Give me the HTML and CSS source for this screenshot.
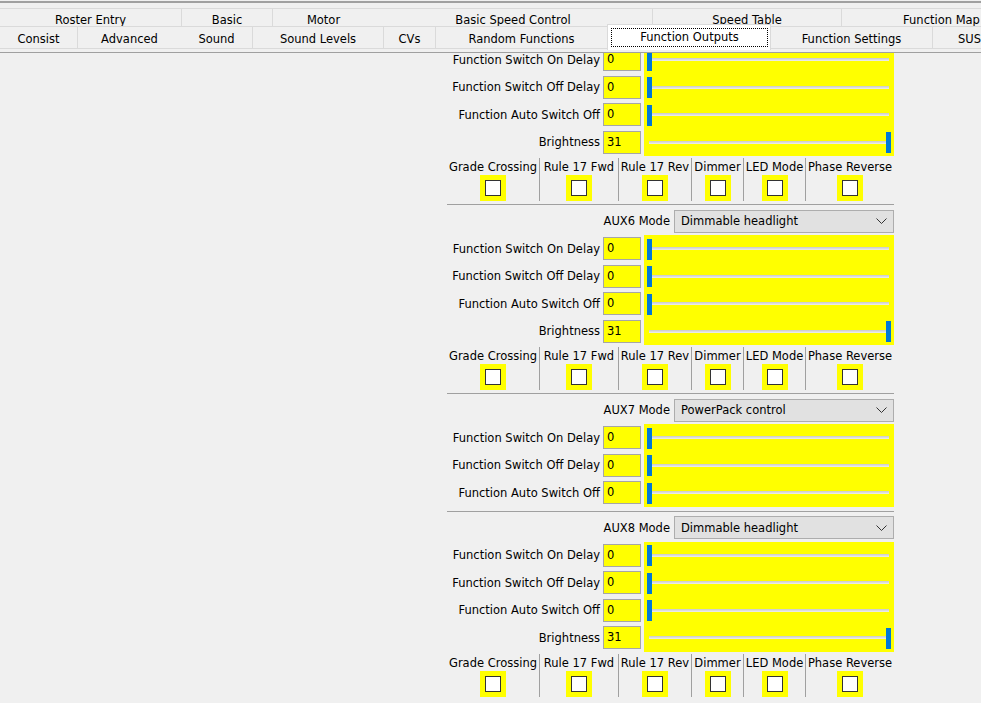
FILE: index.html
```html
<!DOCTYPE html>
<html>
<head>
<meta charset="utf-8">
<link rel="stylesheet" href="styles.css">
</head>
<body>
<div class="window">
  <div class="header">
    <div class="topline"></div>
    <div class="tab-row row1">
      <div class="tab t-roster">Roster Entry</div>
      <div class="tab t-basic sep">Basic</div>
      <div class="tab t-motor sep">Motor</div>
      <div class="tab t-bsc">Basic Speed Control</div>
      <div class="tab t-speed sep">Speed Table</div>
      <div class="tab t-fmap sep">Function Map</div>
    </div>
    <div class="tab-row row2">
      <div class="tab t-consist">Consist</div>
      <div class="tab t-adv sep">Advanced</div>
      <div class="tab t-sound">Sound</div>
      <div class="tab t-slev sep">Sound Levels</div>
      <div class="tab t-cvs sep">CVs</div>
      <div class="tab t-rand sep">Random Functions</div>
      <div class="tab t-fout selected"><span class="focus">Function Outputs</span></div>
      <div class="tab t-fset">Function Settings</div>
      <div class="tab t-sus sep">SUSI</div>
    </div>
    <div class="bottomline"></div>
  </div>

  <div class="viewport">
    <div class="scroll">

      <section class="section">
        <div class="mode-row">
          <span class="mode-label">AUX5 Mode</span>
          <div class="select"><span>Dimmable headlight</span><svg class="chev" width="11" height="6" viewBox="0 0 11 6"><polyline points="0.5,0.5 5.5,5.5 10.5,0.5" fill="none" stroke="#333" stroke-width="1"/></svg></div>
        </div>
        <div class="fields">
          <div class="frow"><span class="flabel">Function Switch On Delay</span><span class="input">0</span><div class="slider"><div class="track"></div><div class="thumb min"></div></div></div>
          <div class="frow"><span class="flabel">Function Switch Off Delay</span><span class="input">0</span><div class="slider"><div class="track"></div><div class="thumb min"></div></div></div>
          <div class="frow"><span class="flabel">Function Auto Switch Off</span><span class="input">0</span><div class="slider"><div class="track"></div><div class="thumb min"></div></div></div>
          <div class="frow"><span class="flabel">Brightness</span><span class="input">31</span><div class="slider"><div class="track"></div><div class="thumb max"></div></div></div>
        </div>
        <div class="checks">
          <div class="ccol"><span class="clabel">Grade Crossing</span><span class="cbox"><span class="cinner"></span></span></div>
          <div class="ccol"><span class="clabel">Rule 17 Fwd</span><span class="cbox"><span class="cinner"></span></span></div>
          <div class="ccol"><span class="clabel">Rule 17 Rev</span><span class="cbox"><span class="cinner"></span></span></div>
          <div class="ccol"><span class="clabel">Dimmer</span><span class="cbox"><span class="cinner"></span></span></div>
          <div class="ccol"><span class="clabel">LED Mode</span><span class="cbox"><span class="cinner"></span></span></div>
          <div class="ccol"><span class="clabel">Phase Reverse</span><span class="cbox"><span class="cinner"></span></span></div>
        </div>
      </section>

      <section class="section">
        <div class="mode-row">
          <span class="mode-label">AUX6 Mode</span>
          <div class="select"><span>Dimmable headlight</span><svg class="chev" width="11" height="6" viewBox="0 0 11 6"><polyline points="0.5,0.5 5.5,5.5 10.5,0.5" fill="none" stroke="#333" stroke-width="1"/></svg></div>
        </div>
        <div class="fields">
          <div class="frow"><span class="flabel">Function Switch On Delay</span><span class="input">0</span><div class="slider"><div class="track"></div><div class="thumb min"></div></div></div>
          <div class="frow"><span class="flabel">Function Switch Off Delay</span><span class="input">0</span><div class="slider"><div class="track"></div><div class="thumb min"></div></div></div>
          <div class="frow"><span class="flabel">Function Auto Switch Off</span><span class="input">0</span><div class="slider"><div class="track"></div><div class="thumb min"></div></div></div>
          <div class="frow"><span class="flabel">Brightness</span><span class="input">31</span><div class="slider"><div class="track"></div><div class="thumb max"></div></div></div>
        </div>
        <div class="checks">
          <div class="ccol"><span class="clabel">Grade Crossing</span><span class="cbox"><span class="cinner"></span></span></div>
          <div class="ccol"><span class="clabel">Rule 17 Fwd</span><span class="cbox"><span class="cinner"></span></span></div>
          <div class="ccol"><span class="clabel">Rule 17 Rev</span><span class="cbox"><span class="cinner"></span></span></div>
          <div class="ccol"><span class="clabel">Dimmer</span><span class="cbox"><span class="cinner"></span></span></div>
          <div class="ccol"><span class="clabel">LED Mode</span><span class="cbox"><span class="cinner"></span></span></div>
          <div class="ccol"><span class="clabel">Phase Reverse</span><span class="cbox"><span class="cinner"></span></span></div>
        </div>
      </section>

      <section class="section short">
        <div class="mode-row">
          <span class="mode-label">AUX7 Mode</span>
          <div class="select"><span>PowerPack control</span><svg class="chev" width="11" height="6" viewBox="0 0 11 6"><polyline points="0.5,0.5 5.5,5.5 10.5,0.5" fill="none" stroke="#333" stroke-width="1"/></svg></div>
        </div>
        <div class="fields">
          <div class="frow"><span class="flabel">Function Switch On Delay</span><span class="input">0</span><div class="slider"><div class="track"></div><div class="thumb min"></div></div></div>
          <div class="frow"><span class="flabel">Function Switch Off Delay</span><span class="input">0</span><div class="slider"><div class="track"></div><div class="thumb min"></div></div></div>
          <div class="frow"><span class="flabel">Function Auto Switch Off</span><span class="input">0</span><div class="slider"><div class="track"></div><div class="thumb min"></div></div></div>
        </div>
      </section>

      <section class="section">
        <div class="mode-row">
          <span class="mode-label">AUX8 Mode</span>
          <div class="select"><span>Dimmable headlight</span><svg class="chev" width="11" height="6" viewBox="0 0 11 6"><polyline points="0.5,0.5 5.5,5.5 10.5,0.5" fill="none" stroke="#333" stroke-width="1"/></svg></div>
        </div>
        <div class="fields">
          <div class="frow"><span class="flabel">Function Switch On Delay</span><span class="input">0</span><div class="slider"><div class="track"></div><div class="thumb min"></div></div></div>
          <div class="frow"><span class="flabel">Function Switch Off Delay</span><span class="input">0</span><div class="slider"><div class="track"></div><div class="thumb min"></div></div></div>
          <div class="frow"><span class="flabel">Function Auto Switch Off</span><span class="input">0</span><div class="slider"><div class="track"></div><div class="thumb min"></div></div></div>
          <div class="frow"><span class="flabel">Brightness</span><span class="input">31</span><div class="slider"><div class="track"></div><div class="thumb max"></div></div></div>
        </div>
        <div class="checks">
          <div class="ccol"><span class="clabel">Grade Crossing</span><span class="cbox"><span class="cinner"></span></span></div>
          <div class="ccol"><span class="clabel">Rule 17 Fwd</span><span class="cbox"><span class="cinner"></span></span></div>
          <div class="ccol"><span class="clabel">Rule 17 Rev</span><span class="cbox"><span class="cinner"></span></span></div>
          <div class="ccol"><span class="clabel">Dimmer</span><span class="cbox"><span class="cinner"></span></span></div>
          <div class="ccol"><span class="clabel">LED Mode</span><span class="cbox"><span class="cinner"></span></span></div>
          <div class="ccol"><span class="clabel">Phase Reverse</span><span class="cbox"><span class="cinner"></span></span></div>
        </div>
      </section>

    </div>
  </div>
</div>
</body>
</html>
```
FILE: styles.css
```css
* { box-sizing: border-box; }
html, body {
  margin: 0;
  padding: 0;
  background: #f0f0f0;
}
body {
  width: 981px;
  height: 703px;
  overflow: hidden;
  font-family: "DejaVu Sans", "Liberation Sans", sans-serif;
  font-size: 11.5px;
  color: #000;
}
.window {
  display: flex;
  flex-direction: column;
  height: 703px;
}

/* ---------- tab header ---------- */
.header {
  position: relative;
  z-index: 2;
  background: #f0f0f0;
  flex: 0 0 auto;
}
.topline {
  height: 2px;
  margin-top: 1px;
  background: #a0a0a0;
}
.tab-row {
  display: flex;
  white-space: nowrap;
  overflow: hidden;
  border-top: 1px solid #dadada;
}
.row1 {
  margin-top: 5px;
  height: 18px;
}
.row2 {
  height: 23px;
  border-bottom: 1px solid #dadada;
  overflow: visible;
}
.tab {
  flex: 0 0 auto;
  text-align: center;
  line-height: 14px;
}
.row1 .tab { padding-top: 4px; height: 17px; }
.row2 .tab { padding-top: 5px; height: 22px; }
.tab.sep { border-left: 1px solid #dadada; }

.t-roster { width: 181px; }
.t-basic { width: 91px; }
.t-motor { width: 102px; }
.t-bsc { width: 278px; }
.t-speed { width: 189px; }
.t-fmap { width: 200px; }

.t-consist { width: 77px; }
.t-adv { width: 104px; }
.t-sound { width: 71px; }
.t-slev { width: 131px; }
.t-cvs { width: 52px; }
.t-rand { width: 172px; }
.t-fout { width: 164px; }
.t-fset { width: 161px; }
.t-sus { width: 49px; text-align: left; padding-left: 25px; overflow: hidden; }

.row2 .tab.selected {
  position: relative;
  margin-top: -3px;
  height: 26px;
  padding: 3px 2px 0 3px;
  background: #ffffff;
  border: 1px solid #dadada;
  border-bottom: none;
}
.focus {
  display: block;
  height: 19px;
  border: 1px dotted #000;
  line-height: 16px;
}
.bottomline {
  height: 1px;
  margin-top: 3px;
  background: #a0a0a0;
}

/* ---------- scrolling content ---------- */
.viewport {
  flex: 1 1 auto;
  overflow: hidden;
  position: relative;
  z-index: 1;
}
.scroll {
  margin-top: -38px;
  margin-left: 447px;
  width: 447px;
}
.section {
  border-top: 1px solid #a0a0a0;
  padding: 4px 0 3px;
}
.section.short { padding-bottom: 4px; }

.mode-row {
  display: flex;
  justify-content: flex-end;
  align-items: center;
  gap: 4px;
  height: 23px;
  padding-top: 1px;
}
.select {
  width: 220px;
  height: 23px;
  background: #e1e1e1;
  border: 1px solid #adadad;
  display: flex;
  align-items: center;
  justify-content: space-between;
  padding: 0 6px 0 6px;
}
.chev { display: block; }

.fields { margin-top: 3px; }
.frow {
  display: grid;
  grid-template-columns: 1fr 38px 250px;
  column-gap: 3px;
  height: 27.5px;
  align-items: center;
}
.flabel {
  text-align: right;
  white-space: nowrap;
}
.input {
  height: 23px;
  background: #ffff00;
  border: 1px solid #a6a6a6;
  padding-left: 3px;
  line-height: 21px;
}
.slider {
  align-self: stretch;
  background: #ffff00;
  position: relative;
  display: flex;
  align-items: center;
  padding: 0 5px 0 5px;
}
.track {
  width: 100%;
  height: 3px;
  background: #dcdcdc;
  border-top: 1px solid #d0d0d0;
  border-bottom: 1px solid #e9e9e9;
}
.thumb {
  position: absolute;
  top: 50%;
  width: 5px;
  height: 21px;
  margin-top: -10px;
  background: #0078d7;
}
.thumb.min { left: 3px; }
.thumb.max { right: 3px; }

.checks {
  display: grid;
  grid-template-columns: 92px 79px 73px 52px 62px 89px;
  margin-top: 2px;
}
.ccol {
  display: flex;
  flex-direction: column;
  align-items: center;
  height: 43px;
}
.ccol + .ccol { border-left: 1px solid #a0a0a0; }
.clabel {
  height: 17px;
  line-height: 18px;
  white-space: nowrap;
}
.cbox {
  width: 26px;
  height: 26px;
  background: #ffff00;
  display: flex;
  align-items: center;
  justify-content: center;
}
.cinner {
  width: 16px;
  height: 16px;
  background: #ffffff;
  border: 1px solid #333333;
}
```
